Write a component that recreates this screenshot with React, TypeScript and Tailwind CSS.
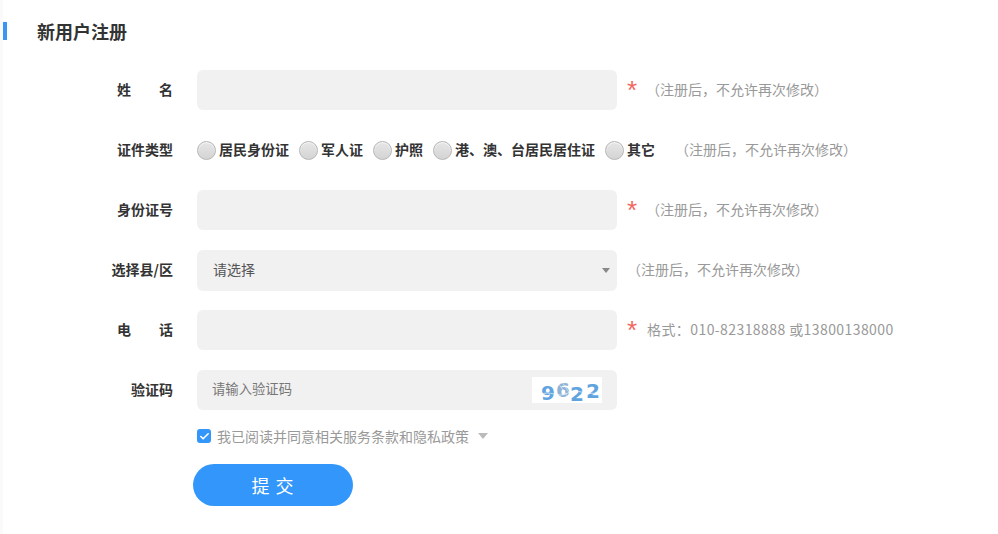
import { Check } from "lucide-react";

const FONT = "font-['Noto_Sans_CJK_SC','Microsoft_YaHei',sans-serif]";

const ID_TYPES = ["居民身份证", "军人证", "护照", "港、澳、台居民居住证", "其它"];
const NO_CHANGE_HINT = "（注册后，不允许再次修改）";

function Label({ children }: { children: React.ReactNode }) {
  return (
    <div className="w-[173px] shrink-0 mb-[2px] flex justify-end text-[14px] font-bold text-[#333]">
      {children}
    </div>
  );
}

// 两个字的标签，两端对齐到四个字的宽度
function WideLabel({ a, b }: { a: string; b: string }) {
  return (
    <Label>
      <span className="w-[56px] flex justify-between">
        <span>{a}</span>
        <span>{b}</span>
      </span>
    </Label>
  );
}

function Star() {
  return (
    <span className="ml-[10px] w-[10px] h-[20px] mb-[9px] text-[26px] leading-[28px] text-[#f0695f] font-['Liberation_Sans',sans-serif]">
      *
    </span>
  );
}

function Hint({ children, className }: { children: React.ReactNode; className: string }) {
  return <span className={`mb-[2px] text-[14px] text-[#999] whitespace-nowrap ${className}`}>{children}</span>;
}

function TextField() {
  return <div className="ml-[24px] w-[420px] h-[40px] rounded-[6px] bg-[#f1f1f1]" />;
}

function Radio({ label }: { label: string }) {
  return (
    <label className="flex items-center gap-[3px]">
      <span className="w-[19px] h-[19px] rounded-full border border-[#b5b5b5] bg-gradient-to-b from-[#e6e6e6] to-[#d4d4d4] shadow-[inset_0_1px_1px_#f8f8f8]" />
      <span className="mb-[2px] text-[14px] font-bold text-[#333] whitespace-nowrap">{label}</span>
    </label>
  );
}

function Captcha() {
  return (
    <div className="relative w-[70px] h-[26px] bg-white flex items-center pl-[9px] font-['DejaVu_Sans',sans-serif] text-[20px] leading-none font-bold text-[#5fa4e0]">
      <span className="w-[15px] translate-y-[3px]">9</span>
      <span className="w-[14px] text-[#8db3d6]">6</span>
      <span className="w-[16px] translate-y-[4px]">2</span>
      <span className="w-[15px] translate-y-[1px]">2</span>
      <svg className="absolute inset-0" width="70" height="26" viewBox="0 0 70 26" fill="none">
        <path d="M8 18 C18 12 26 22 36 16 S52 20 68 15" stroke="white" strokeWidth="0.8" opacity="0.8" />
        <path d="M26 6 L36 20 M30 5 L38 17" stroke="white" strokeWidth="0.6" opacity="0.8" />
      </svg>
    </div>
  );
}

export default function App() {
  return (
    <div className={`${FONT} h-[534px] w-[998px] overflow-hidden bg-white border-l-[3px] border-[#fafafa]`}>
      {/* 标题 */}
      <div className="flex items-center h-[18px] mt-[22px]">
        <div className="w-[4px] h-[18px] bg-[#3a96f3]" />
        <h2 className="ml-[30px] text-[18px] font-bold text-[#333]">新用户注册</h2>
      </div>

      <div className="-ml-[3px] mt-[30px] flex flex-col gap-5">
        <div className="flex items-center h-[40px]">
          <WideLabel a="姓" b="名" />
          <TextField />
          <Star />
          <Hint className="ml-[9px]">{NO_CHANGE_HINT}</Hint>
        </div>

        <div className="flex items-center h-[40px]">
          <Label>证件类型</Label>
          <div className="ml-[24px] flex items-center gap-[10px]">
            {ID_TYPES.map((t) => (
              <Radio key={t} label={t} />
            ))}
          </div>
          <Hint className="ml-[20px]">{NO_CHANGE_HINT}</Hint>
        </div>

        <div className="flex items-center h-[40px]">
          <Label>身份证号</Label>
          <TextField />
          <Star />
          <Hint className="ml-[9px]">{NO_CHANGE_HINT}</Hint>
        </div>

        <div className="flex items-center h-[41px] -mb-px">
          <Label>选择县/区</Label>
          <div className="ml-[24px] w-[420px] h-[41px] rounded-[6px] bg-[#f1f1f1] flex items-center justify-between pl-[16px] pr-[7px]">
            <span className="mb-[2px] text-[14px] text-[#555]">请选择</span>
            <span className="w-0 h-0 border-x-[4px] border-x-transparent border-t-[5px] border-t-[#888]" />
          </div>
          <Hint className="ml-[10px]">{NO_CHANGE_HINT}</Hint>
        </div>

        <div className="flex items-center h-[40px]">
          <WideLabel a="电" b="话" />
          <TextField />
          <Star />
          <Hint className="ml-[10px] tracking-[0.42px]">格式：010-82318888 或13800138000</Hint>
        </div>

        <div className="flex items-center h-[40px]">
          <Label>验证码</Label>
          <div className="ml-[24px] w-[420px] h-[40px] rounded-[6px] bg-[#f1f1f1] flex items-center justify-between pl-[15px] pr-[15px]">
            <span className="mb-[2px] text-[13.33px] text-[#777]">请输入验证码</span>
            <Captcha />
          </div>
        </div>
      </div>

      <div className="-ml-[3px] mt-[17px] pl-[197px] flex items-center h-[18px]">
        <span className="w-[14px] h-[14px] rounded-[3px] bg-[#3296fa] flex items-center justify-center">
          <Check size={11} strokeWidth={3.5} className="text-white" />
        </span>
        <span className="ml-[6px] text-[14px] text-[#999] whitespace-nowrap">我已阅读并同意相关服务条款和隐私政策</span>
        <span className="ml-[9px] w-0 h-0 border-x-[5px] border-x-transparent border-t-[6px] border-t-[#bbb]" />
      </div>

      <div className="-ml-[3px] mt-[19px] pl-[193px]">
        <button className="w-[160px] h-[42px] rounded-full bg-[#3296fa] text-white text-[18px] tracking-[1px]">
          提 交
        </button>
      </div>
    </div>
  );
}
